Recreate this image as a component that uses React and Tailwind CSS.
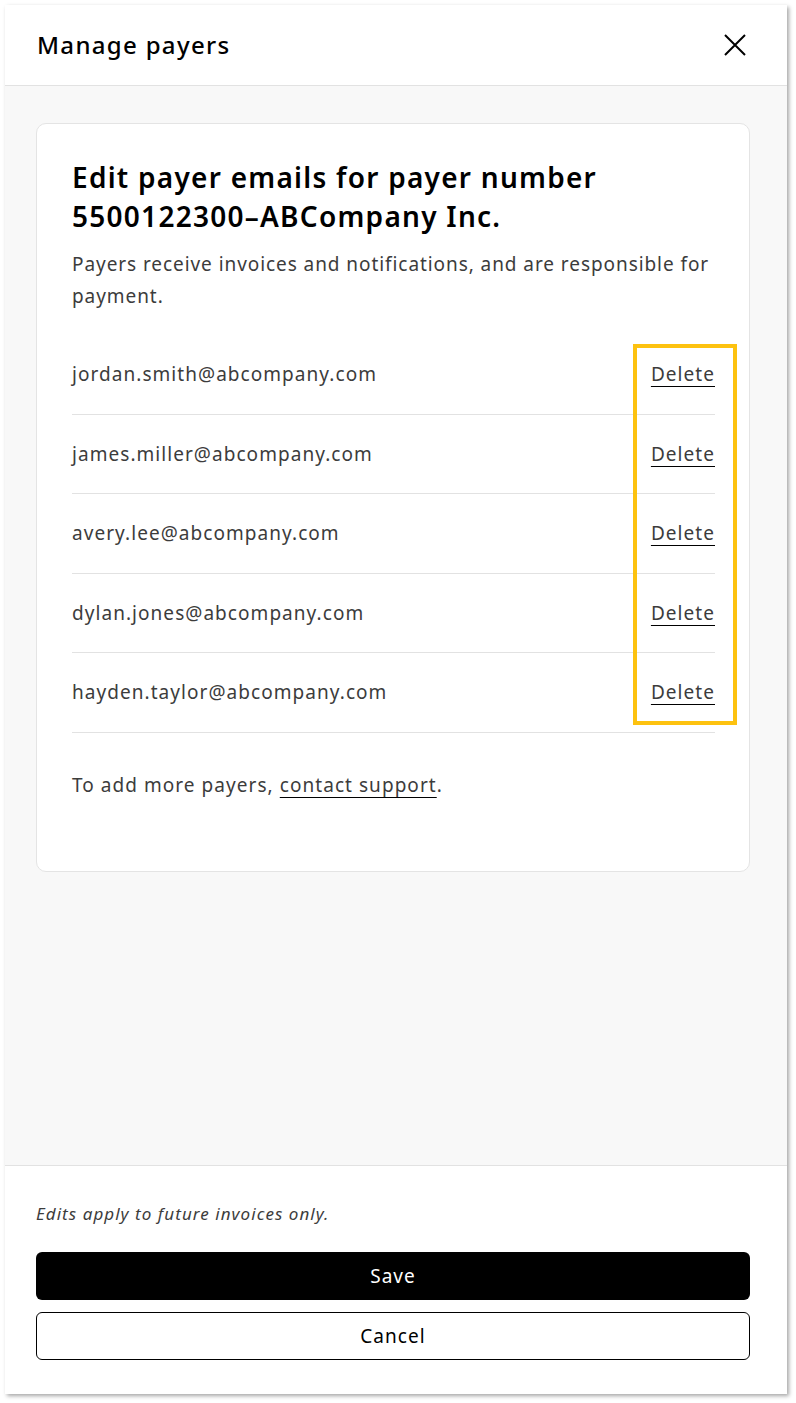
import React from "react";

const payers = [
  "jordan.smith@abcompany.com",
  "james.miller@abcompany.com",
  "avery.lee@abcompany.com",
  "dylan.jones@abcompany.com",
  "hayden.taylor@abcompany.com",
];

const ManagePayers = () => {
  return (
    <div className="min-h-[1403px] bg-white pt-[5px] pl-[5px] font-['Noto_Sans',sans-serif] tracking-[1.05px]">
      <div className="w-[782px] h-[1389px] flex flex-col bg-white shadow-[2px_2px_4px_rgba(0,0,0,0.35)]">
        {/* Header */}
        <div className="h-[81px] shrink-0 flex items-center justify-between pl-8 pr-[40px] border-b border-[#e2e2e2]">
          <h1 className="text-[24px] font-medium text-black tracking-[0.055em]">Manage payers</h1>
          <button className="w-6 h-6 flex items-center justify-center text-black">
            <svg width="22" height="22" viewBox="0 0 22 22" fill="none" stroke="currentColor" strokeWidth="2">
              <path d="M1 1L21 21M21 1L1 21" />
            </svg>
          </button>
        </div>

        {/* Body */}
        <div className="flex-1 bg-[#f8f8f8] pl-[31px] pr-[37px] pt-[37px]">
          <div className="relative bg-white border border-[#e4e4e4] rounded-[10px] pl-[35px] pr-[34px] pt-[34px] pb-[70px]">
            <h2 className="text-[28px] leading-[39px] font-semibold text-black tracking-[0.045em]">
              Edit payer emails for payer number 5500122300–ABCompany Inc.
            </h2>
            <p className="mt-3 text-[19px] leading-[32px] text-[#3c3c3c] tracking-[0.93px]">
              Payers receive invoices and notifications, and are responsible for payment.
            </p>
            <div className="mt-[23px]">
              {payers.map((email) => (
                <div
                  key={email}
                  className="h-[79.5px] flex items-center justify-between border-b border-[#e2e2e2] text-[19px] text-[#3c3c3c]"
                >
                  <span>{email}</span>
                  <a href="#" className="underline underline-offset-[5px] decoration-black">
                    Delete
                  </a>
                </div>
              ))}
            </div>
            <p className="mt-9 text-[19px] leading-[32px] text-[#3c3c3c]">
              To add more payers,{" "}
              <a href="#" className="underline underline-offset-[5px] decoration-black">
                contact support
              </a>
              .
            </p>
            {/* Highlight */}
            <div className="absolute left-[596px] top-[220px] w-[104px] h-[381px] border-4 border-[#fdc20f] pointer-events-none"></div>
          </div>
        </div>

        {/* Footer */}
        <div className="shrink-0 border-t border-[#e2e2e2] pl-[31px] pr-[37px] pt-9 pb-[34px]">
          <p className="text-[17px] leading-[24px] italic text-[#3c3c3c]">
            Edits apply to future invoices only.
          </p>
          <button className="mt-[26px] w-full h-12 rounded-[6px] bg-black text-white text-[19px]">
            Save
          </button>
          <button className="mt-3 w-full h-12 rounded-[6px] border border-black bg-white text-black text-[19px]">
            Cancel
          </button>
        </div>
      </div>
    </div>
  );
};

export default ManagePayers;
